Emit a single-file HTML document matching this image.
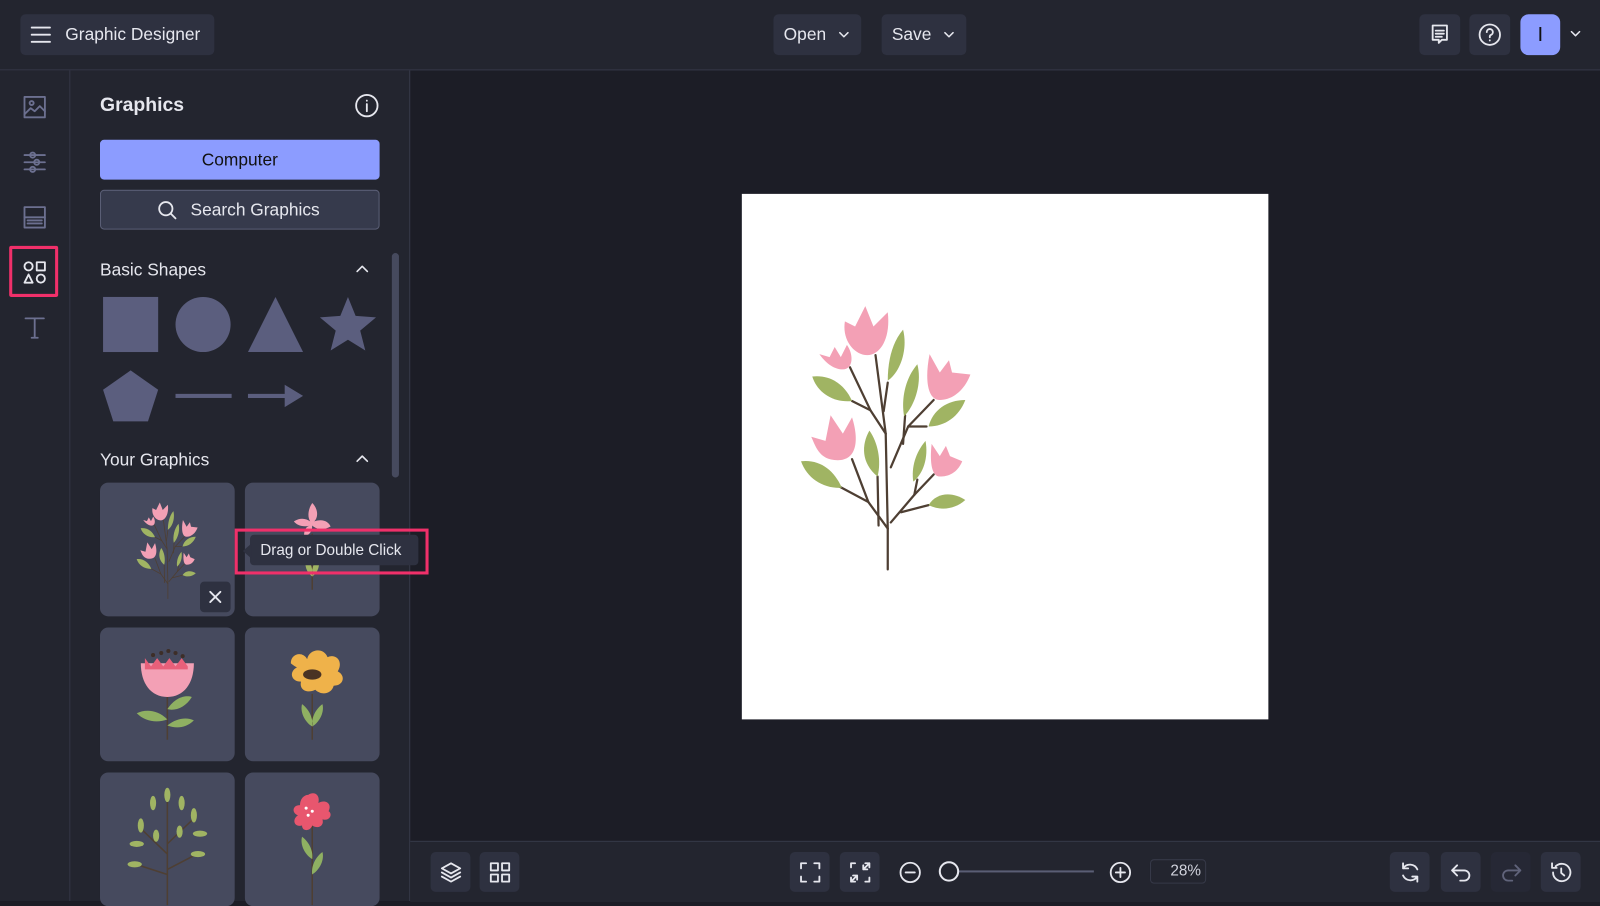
<!DOCTYPE html>
<html><head><meta charset="utf-8"><style>
html,body{margin:0;padding:0;width:1600px;height:901px;overflow:hidden;background:#1c1d26;}
#w{position:absolute;left:0;top:0;width:1568px;height:883px;transform:scale(1.020408);transform-origin:0 0;font-family:"Liberation Sans",sans-serif;color:#e6e7ee;}
.a{position:absolute;}
.btn{position:absolute;background:#2e3140;border-radius:5px;}
svg{display:block}
.ic{stroke:#e6e7ee;fill:none;stroke-width:1.8;stroke-linecap:round;stroke-linejoin:round}
.sb{stroke:#6c7090;fill:none;stroke-width:1.8;stroke-linecap:round;stroke-linejoin:round}
.th{position:absolute;width:132px;height:131px;border-radius:8px;background:#464a5e;overflow:hidden}
</style></head><body><div id="w">
<!-- top bar -->
<div class="a" style="left:0;top:0;width:1568px;height:68px;background:#23252f;border-bottom:1px solid #363948"></div>
<div class="btn" style="left:20px;top:14px;width:190px;height:40px;"></div>
<svg class="a" style="left:30px;top:24px" width="20" height="20"><path class="ic" d="M1 3h18M1 10h18M1 17h18"/></svg>
<div class="a" style="left:64px;top:24px;font-size:17px;color:#e6e7ee">Graphic Designer</div>
<div class="btn" style="left:758px;top:14px;width:86px;height:40px"></div>
<div class="a" style="left:768px;top:24px;font-size:17px">Open</div>
<svg class="a" style="left:821px;top:29px" width="12" height="10"><path class="ic" style="stroke-width:1.5" d="M2 3l4 4 4-4"/></svg>
<div class="btn" style="left:864px;top:14px;width:83px;height:40px"></div>
<div class="a" style="left:874px;top:24px;font-size:17px">Save</div>
<svg class="a" style="left:924px;top:29px" width="12" height="10"><path class="ic" style="stroke-width:1.5" d="M2 3l4 4 4-4"/></svg>
<div class="btn" style="left:1391px;top:14px;width:40px;height:40px"></div>
<svg class="a" style="left:1399px;top:22px" width="24" height="24"><path class="ic" d="M5 3h14v14h-5l-3 3v-3H5z M8 8h8M8 11h8M8 14h6"/></svg>
<div class="btn" style="left:1440px;top:14px;width:40px;height:40px"></div>
<svg class="a" style="left:1448px;top:22px" width="24" height="24"><circle class="ic" cx="12" cy="12" r="10"/><path class="ic" d="M9 9.5a3 3 0 1 1 4 2.8c-.7.3-1 .8-1 1.7v.5M12 17.5v.2"/></svg>
<div class="a" style="left:1490px;top:14px;width:39px;height:40px;background:#8c9cff;border-radius:8px;color:#111;font-size:20px;text-align:center;line-height:40px">I</div>
<svg class="a" style="left:1538px;top:28px" width="12" height="10"><path class="ic" style="stroke-width:1.5" d="M2 3l4 4 4-4"/></svg>

<!-- left icon bar -->
<div class="a" style="left:0;top:69px;width:68px;height:814px;background:#23252f;border-right:1px solid #363948"></div>
<svg class="a" style="left:22px;top:93px" width="24" height="24"><rect class="sb" x="2" y="2" width="20" height="20"/><circle class="sb" cx="9" cy="8" r="2"/><path class="sb" d="M2 19l6-6 4 3 5-5 5 5"/></svg>
<svg class="a" style="left:22px;top:147px" width="24" height="24"><path class="sb" d="M2 5h20M2 12h20M2 19h20"/><circle cx="10" cy="5" r="2.5" fill="#23252f" class="sb"/><circle cx="14" cy="12" r="2.5" fill="#23252f" class="sb"/><circle cx="10" cy="19" r="2.5" fill="#23252f" class="sb"/></svg>
<svg class="a" style="left:22px;top:201px" width="24" height="24"><rect class="sb" x="2" y="2" width="20" height="20"/><path class="sb" d="M2 12h20M5 15h14M5 18h14"/></svg>
<div class="a" style="left:9px;top:241px;width:48px;height:50px;border:3px solid #f0306a;box-sizing:border-box;border-radius:2px"></div>
<svg class="a" style="left:22px;top:255px" width="24" height="24"><circle class="ic" cx="6" cy="6" r="4"/><rect class="ic" x="14" y="2" width="8" height="8"/><path class="ic" d="M6 14l4 8H2z"/><circle class="ic" cx="18" cy="18" r="4"/></svg>
<svg class="a" style="left:22px;top:309px" width="24" height="24"><path class="sb" d="M3 3h18M12 3v19M9 22h6"/></svg>

<!-- panel -->
<div class="a" style="left:69px;top:69px;width:332px;height:814px;background:#23252f;border-right:1px solid #363948"></div>
<div class="a" style="left:98px;top:93px;font-size:19px;font-weight:bold">Graphics</div>
<svg class="a" style="left:347px;top:91px" width="25" height="25"><circle class="ic" cx="12.5" cy="12.5" r="10.5"/><path class="ic" d="M12.5 11v7M12.5 7.5v.2"/></svg>
<div class="a" style="left:98px;top:137px;width:274px;height:39px;background:#8c9cff;border-radius:4px;color:#111;font-size:17px;text-align:center;line-height:39px">Computer</div>
<div class="a" style="left:98px;top:186px;width:274px;height:39px;background:#363a4c;border:1px solid #5a5e75;box-sizing:border-box;border-radius:4px;font-size:17px;text-align:center;line-height:37px;padding-left:30px">Search Graphics</div>
<svg class="a" style="left:154px;top:196px" width="20" height="20"><circle class="ic" cx="8.5" cy="8.5" r="6.5"/><path class="ic" d="M13.5 13.5l4.5 4.5"/></svg>
<div class="a" style="left:384px;top:248px;width:7px;height:220px;background:#464a5e;border-radius:4px"></div>
<div class="a" style="left:98px;top:255px;font-size:17px">Basic Shapes</div>
<svg class="a" style="left:348px;top:258px" width="14" height="12"><path class="ic" style="stroke-width:1.6" d="M2 8l5-5 5 5"/></svg>
<svg class="a" style="left:98px;top:288px" width="275" height="130" fill="#5b5e7e">
<rect x="3" y="3" width="54" height="54"/>
<circle cx="101" cy="30" r="27"/>
<path d="M172 3l27 54h-54z"/>
<path d="M243 3l7.5 18.5 20 1.5-15.5 13 5 19.5-17-10.5-17 10.5 5-19.5-15.5-13 20-1.5z"/>
<path d="M30 75l27 19-10 31H13L3 94z"/>
<rect x="74" y="98" width="55" height="4"/>
<path d="M145 98h36v-9l18 11-18 11v-9h-36z"/>
</svg>
<div class="a" style="left:98px;top:441px;font-size:17px">Your Graphics</div>
<svg class="a" style="left:348px;top:444px" width="14" height="12"><path class="ic" style="stroke-width:1.6" d="M2 8l5-5 5 5"/></svg>

<svg width="0" height="0" style="position:absolute"><defs>
<g id="fl">
<g stroke="#4e3f33" stroke-width="2.2" fill="none" stroke-linecap="round" stroke-linejoin="round">
<path d="M107 273L107 233L105 140L95 63"/>
<path d="M105 140L90 117L70 75"/>
<path d="M90 117L72 108"/>
<path d="M103 118L107 90"/>
<path d="M110 173L127 133L152 107"/>
<path d="M122 150L124 122"/>
<path d="M127 133L145 133"/>
<path d="M107 233L88 207L72 165"/>
<path d="M88 207L60 192"/>
<path d="M97 182L98 230"/>
<path d="M110 227L133 200L152 180"/>
<path d="M133 200L136 185"/>
<path d="M120 217L147 210"/>
</g>
<g fill="#a0b463">
<path d="M33 84c18-2 32 8 39 24-18 2-34-8-39-24z"/>
<path d="M122 38c-12 14-15 34-15 50 12-8 20-30 15-50z"/>
<path d="M136 72c-12 14-16 34-13 51 10-10 18-32 13-51z"/>
<path d="M183 107c-18 0-32 10-36 26 16 0 30-10 36-26z"/>
<path d="M22 167c18-2 32 8 40 26-18 1-34-9-40-26z"/>
<path d="M89 137c-8 14-8 32 8 45 4-16 0-34-8-45z"/>
<path d="M144 147c-10 12-14 26-12 40 10-8 15-24 12-40z"/>
<path d="M183 205c-12-8-28-8-36 5 12 6 26 4 36-5z"/>
</g>
<g fill="#f3a0b5">
<path d="M65 30l10 5 10-20 8 20 14-14c3 25-7 42-20 42S62 48 65 30z"/>
<path d="M40 62l10 3 5-10 6 10 6-12c7 10 6 24-4 24s-18-8-23-15z"/>
<path d="M148 62l10 18 9-12 3 12 18 2c-6 16-18 25-30 25s-15-20-10-45z"/>
<path d="M32 143l14 4 5-25 12 18 9-16c7 22 5 42-14 42s-22-15-26-23z"/>
<path d="M150 150l8 12 6-10 4 10 12 5c-5 12-14 15-22 15s-10-14-8-32z"/>
</g>
</g></defs></svg>

<div class="th" style="left:98px;top:473px"><svg width="132" height="131"><use href="#fl" transform="translate(28 14) scale(0.36 0.365)"/></svg>
<div class="a" style="left:98px;top:97px;width:30px;height:30px;background:#2e3140;border-radius:4px"></div>
<svg class="a" style="left:105px;top:104px" width="16" height="16"><path class="ic" d="M3 3l10 10M13 3L3 13"/></svg></div>
<div class="th" style="left:240px;top:473px"><svg width="132" height="131">
<path d="M66 105V50" stroke="#4e3f33" stroke-width="1.5"/><path d="M66 92c-6-4-8-12-6-18 5 4 7 12 6 18zM66 92c6-4 8-12 6-18-5 4-7 12-6 18z" fill="#a0b463"/>
<path d="M66 20c6 6 6 14 2 18 8-3 14 0 16 5-7 4-14 3-18-1 0 6-3 10-8 10 0-6 2-9 6-10-7 2-13 0-16-4 6-4 12-3 16 0-3-5-2-12 2-18z" fill="#f3a0b5"/></svg></div>
<div class="th" style="left:98px;top:615px"><svg width="132" height="131">
<path d="M66 110V60" stroke="#4e3f33" stroke-width="1.5"/>
<path d="M66 90c-10-10-22-10-30-6 8 8 20 10 30 6zM66 80c8-12 18-14 24-12-6 10-16 14-24 12zM66 96c10-8 20-8 26-5-8 8-18 8-26 5z" fill="#8fb062"/>
<path d="M40 35h52c0 20-10 33-26 33S40 55 40 35z" fill="#f3a0b5"/>
<path d="M44 30l6 8 6-8 6 8 6-8 6 8 6-8 6 8v3H44z" fill="#e8607a"/>
<g fill="#3d2e28"><circle cx="52" cy="27" r="2"/><circle cx="60" cy="25" r="2"/><circle cx="67" cy="23" r="2"/><circle cx="74" cy="25" r="2"/><circle cx="81" cy="28" r="2"/></g></svg></div>
<div class="th" style="left:240px;top:615px"><svg width="132" height="131">
<path d="M66 110V65" stroke="#4e3f33" stroke-width="1.5"/>
<path d="M66 97c-8-5-12-15-10-22 8 6 11 15 10 22zM66 97c8-5 12-15 10-22-8 6-11 15-10 22z" fill="#8fb062"/>
<path d="M45 35c0-10 12-12 16-4 2-10 16-12 20-2 8-4 16 4 10 14 8 4 6 14-4 14-2 8-12 10-18 4-8 4-16 0-14-8-10 0-12-10-4-14-4-2-6-4-6-4z" fill="#efb24a"/>
<ellipse cx="66" cy="46" rx="9" ry="5" fill="#4a3324"/></svg></div>
<div class="th" style="left:98px;top:757px"><svg width="132" height="131">
<g stroke="#4e3f33" stroke-width="1.5" fill="none"><path d="M66 130V20M66 80L40 55M66 70L92 45M66 100L35 90M66 95L95 80"/></g>
<g fill="#a0b463"><ellipse cx="66" cy="22" rx="3" ry="7"/><ellipse cx="52" cy="30" rx="3" ry="7"/><ellipse cx="80" cy="30" rx="3" ry="7"/><ellipse cx="40" cy="52" rx="3" ry="7"/><ellipse cx="92" cy="42" rx="3" ry="7"/><ellipse cx="36" cy="70" rx="7" ry="3"/><ellipse cx="98" cy="60" rx="7" ry="3"/><ellipse cx="34" cy="90" rx="7" ry="3"/><ellipse cx="96" cy="80" rx="7" ry="3"/><ellipse cx="55" cy="62" rx="3" ry="6"/><ellipse cx="78" cy="58" rx="3" ry="6"/></g></svg></div>
<div class="th" style="left:240px;top:757px"><svg width="132" height="131">
<path d="M66 130V50" stroke="#4e3f33" stroke-width="1.5"/>
<path d="M66 85c-8-5-12-15-10-22 8 6 11 15 10 22zM66 100c8-5 12-15 10-22-8 6-11 15-10 22z" fill="#8fb062"/>
<path d="M62 22c6-4 12 0 10 8 6-4 14 0 10 8 4 2 2 10-6 8 2 6-4 10-10 6-2 6-10 6-10 0-8 2-10-6-4-10-6-2-6-10 2-10 0-6 4-10 8-10z" fill="#e8566e"/>
<g fill="#fff"><circle cx="60" cy="35" r="1.5"/><circle cx="66" cy="38" r="1.5"/><circle cx="62" cy="42" r="1.5"/></g></svg></div>

<!-- tooltip -->
<div class="a" style="left:245px;top:524px;width:165px;height:30px;background:#2e3140;border-radius:4px"></div>
<div class="a" style="left:238px;top:533px;width:0;height:0;border-top:7px solid transparent;border-bottom:7px solid transparent;border-right:8px solid #2e3140"></div>
<div class="a" style="left:255px;top:531px;font-size:15px;color:#e6e7ee">Drag or Double Click</div>
<div class="a" style="left:230px;top:518px;width:190px;height:45px;border:3px solid #f0306a;box-sizing:border-box"></div>

<!-- canvas -->
<div class="a" style="left:727px;top:190px;width:516px;height:515px;background:#fff"></div>
<svg class="a" style="left:743px;top:278px" width="220" height="290"><use href="#fl" transform="translate(20 7)"/></svg>

<!-- bottom bar -->
<div class="a" style="left:402px;top:824px;width:1166px;height:59px;background:#23252f;border-top:1px solid #363948"></div>
<div class="btn" style="left:422px;top:835px;width:39px;height:39px"></div>
<svg class="a" style="left:430px;top:843px" width="24" height="24"><path class="ic" d="M12 3l9 5-9 5-9-5z M3 12l9 5 9-5 M3 16l9 5 9-5"/></svg>
<div class="btn" style="left:470px;top:835px;width:39px;height:39px"></div>
<svg class="a" style="left:479px;top:844px" width="22" height="22"><rect class="ic" x="2" y="2" width="7" height="7"/><rect class="ic" x="13" y="2" width="7" height="7"/><rect class="ic" x="2" y="13" width="7" height="7"/><rect class="ic" x="13" y="13" width="7" height="7"/></svg>
<div class="btn" style="left:774px;top:835px;width:39px;height:39px"></div>
<svg class="a" style="left:783px;top:844px" width="22" height="22"><path class="ic" d="M2 7V2h5M15 2h5v5M20 15v5h-5M7 20H2v-5"/></svg>
<div class="btn" style="left:823px;top:835px;width:39px;height:39px"></div>
<svg class="a" style="left:832px;top:844px" width="22" height="22"><path class="ic" d="M2 6V2h4M20 6V2h-4M14 8l6-6M14 8h4M14 8V4 M2 16v4h4M8 14l-6 6M8 14H4M8 14v4 M20 16v4h-4"/></svg>
<svg class="a" style="left:880px;top:843px" width="24" height="24"><circle class="ic" cx="12" cy="12" r="9.5"/><path class="ic" d="M7.5 12h9"/></svg>
<div class="a" style="left:930px;top:853px;width:142px;height:2px;background:#5a5e75"></div>
<div class="a" style="left:920px;top:844px;width:16px;height:16px;border:2px solid #e6e7ee;border-radius:50%;background:#23252f"></div>
<svg class="a" style="left:1086px;top:843px" width="24" height="24"><circle class="ic" cx="12" cy="12" r="9.5"/><path class="ic" d="M7.5 12h9M12 7.5v9"/></svg>
<div class="a" style="left:1127px;top:842px;width:55px;height:24px;border:1px solid #363948;border-radius:4px;box-sizing:border-box;font-size:15px;text-align:right;padding-right:4px;line-height:22px;color:#d0d2dc">28%</div>
<div class="btn" style="left:1362px;top:835px;width:39px;height:39px"></div>
<svg class="a" style="left:1370px;top:843px" width="24" height="24"><path class="ic" d="M19 9A8 8 0 0 0 5 8M5 15a8 8 0 0 0 14 1M5 3v5h5M19 21v-5h-5"/></svg>
<div class="btn" style="left:1412px;top:835px;width:39px;height:39px"></div>
<svg class="a" style="left:1420px;top:843px" width="24" height="24"><path class="ic" d="M8 5L3 10l5 5M3 10h12a5 5 0 0 1 0 10h-4"/></svg>
<div class="btn" style="left:1461px;top:835px;width:39px;height:39px;background:#262835"></div>
<svg class="a" style="left:1469px;top:843px" width="24" height="24"><path class="ic" style="stroke:#60637a" d="M16 5l5 5-5 5M21 10H9a5 5 0 0 0 0 10h4"/></svg>
<div class="btn" style="left:1510px;top:835px;width:39px;height:39px"></div>
<svg class="a" style="left:1518px;top:843px" width="24" height="24"><path class="ic" d="M4 12a8.5 8.5 0 1 0 2.5-6M3 3v4.5h4.5M12 8v4.5l3 2.5"/></svg>
</div></body></html>
